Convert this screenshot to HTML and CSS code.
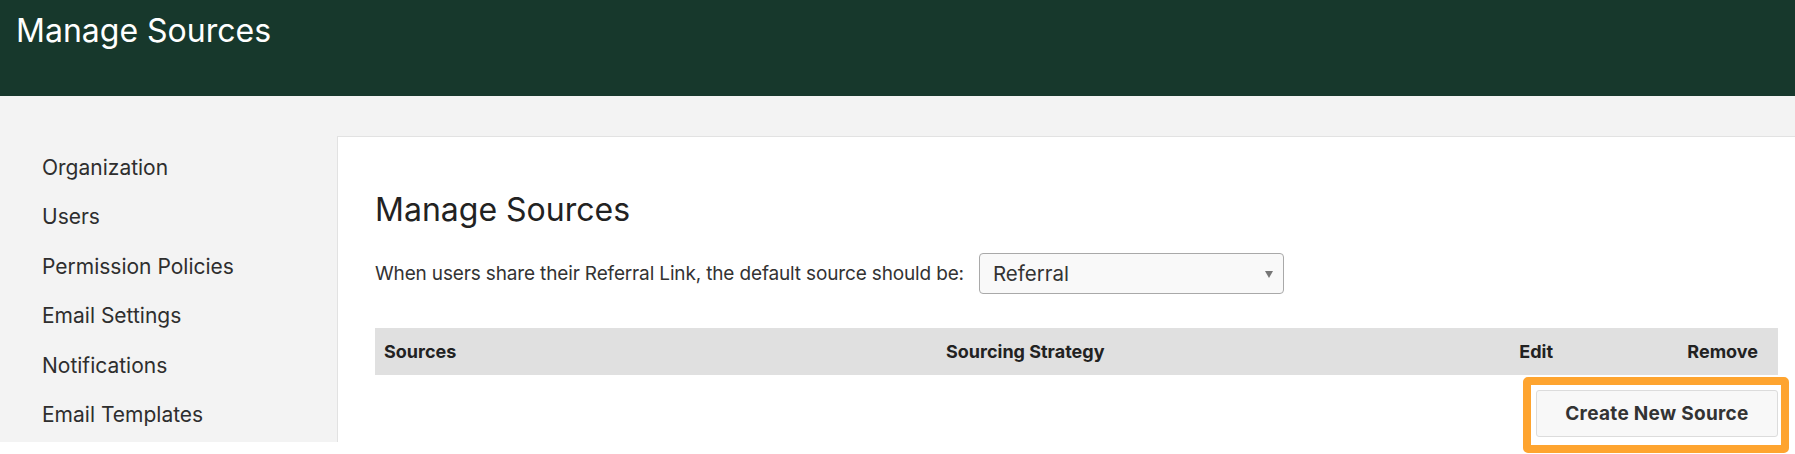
FILE: index.html
```html
<!DOCTYPE html>
<html lang="en">
<head>
<meta charset="utf-8">
<title>Manage Sources</title>
<link rel="stylesheet" href="styles.css">
</head>
<body>
<header class="topbar">
  <h1 class="topbar-title">Manage Sources</h1>
</header>
<div class="layout">
  <nav class="sidebar">
    <a class="nav-item" href="#">Organization</a>
    <a class="nav-item" href="#">Users</a>
    <a class="nav-item" href="#">Permission Policies</a>
    <a class="nav-item" href="#">Email Settings</a>
    <a class="nav-item" href="#">Notifications</a>
    <a class="nav-item" href="#">Email Templates</a>
  </nav>
  <main class="card">
    <h2 class="card-title">Manage Sources</h2>
    <div class="default-row">
      <span class="default-label">When users share their Referral Link, the default source should be:</span>
      <div class="select">
        <span class="select-value">Referral</span>
        <span class="select-arrow"></span>
      </div>
    </div>
    <div class="table-head">
      <div class="th">Sources</div>
      <div class="th">Sourcing Strategy</div>
      <div class="th th-right">Edit</div>
      <div class="th th-right">Remove</div>
    </div>
    <div class="actions">
      <button class="btn" type="button">Create New Source<span class="highlight"></span></button>
    </div>
  </main>
</div>
</body>
</html>
```
FILE: styles.css
```css
* { box-sizing: border-box; }

html, body {
  margin: 0;
  padding: 0;
  background: #ffffff;
  font-family: Inter, "Liberation Sans", Arial, sans-serif;
  color: #333333;
}

body {
  min-height: 100vh;
}

.topbar {
  height: 96px;
  background: #17382c;
  padding: 11px 0 0 16px;
}

.topbar-title {
  margin: 0;
  font-size: 32px;
  line-height: 40px;
  font-weight: 400;
  color: #ffffff;
}

.layout {
  display: flex;
  height: 346px;
  background: #f3f3f3;
}

.sidebar {
  width: 337px;
  flex: none;
  display: flex;
  flex-direction: column;
  padding: 47px 0 0 42px;
}

.nav-item {
  display: block;
  font-size: 21px;
  line-height: 49.4px;
  color: #2e2e2e;
  text-decoration: none;
}

.card {
  flex: 1;
  margin-top: 40px;
  background: #ffffff;
  border-top: 1px solid #e2e2e2;
  border-left: 1px solid #e2e2e2;
  padding: 53px 17px 0 37px;
}

.card-title {
  margin: 0;
  font-size: 32px;
  line-height: 40px;
  font-weight: 400;
  color: #222222;
}

.default-row {
  display: flex;
  align-items: center;
  margin-top: 23px;
  height: 41px;
}

.default-label {
  font-size: 19px;
  letter-spacing: -0.15px;
  line-height: 28px;
  color: #333333;
  margin-right: 15px;
}

.select {
  position: relative;
  width: 305px;
  height: 41px;
  border: 1px solid #a9a9a9;
  border-radius: 4px;
  background: #f9f9f9;
  display: flex;
  align-items: center;
  padding-left: 13px;
}

.select-value {
  font-size: 20.5px;
  color: #333333;
}

.select-arrow {
  position: absolute;
  right: 10px;
  top: 17px;
  width: 0;
  height: 0;
  border-left: 4.5px solid transparent;
  border-right: 4.5px solid transparent;
  border-top: 7px solid #777777;
}

.table-head {
  margin-top: 34px;
  height: 47px;
  background: #e0e0e0;
  display: grid;
  grid-template-columns: 562px 1fr 120px 205px;
  align-items: center;
}

.th {
  font-size: 18px;
  font-weight: 700;
  color: #222222;
  padding-left: 9px;
}

.th-right {
  text-align: right;
  padding-left: 0;
  padding-right: 20px;
}

.actions {
  display: flex;
  justify-content: flex-end;
  margin-top: 15px;
}

.btn {
  position: relative;
  width: 242px;
  height: 47px;
  border: 1px solid #dcdcdc;
  border-radius: 3px;
  background: #f8f8f8;
  font-family: Inter, "Liberation Sans", Arial, sans-serif;
  font-size: 19px;
  letter-spacing: 0.3px;
  font-weight: 700;
  color: #333333;
  padding: 0;
  overflow: visible;
}

.highlight {
  position: absolute;
  left: -14px;
  top: -14px;
  width: 266px;
  height: 76px;
  border: 8px solid #fea42f;
  border-radius: 5px;
  pointer-events: none;
}
```
